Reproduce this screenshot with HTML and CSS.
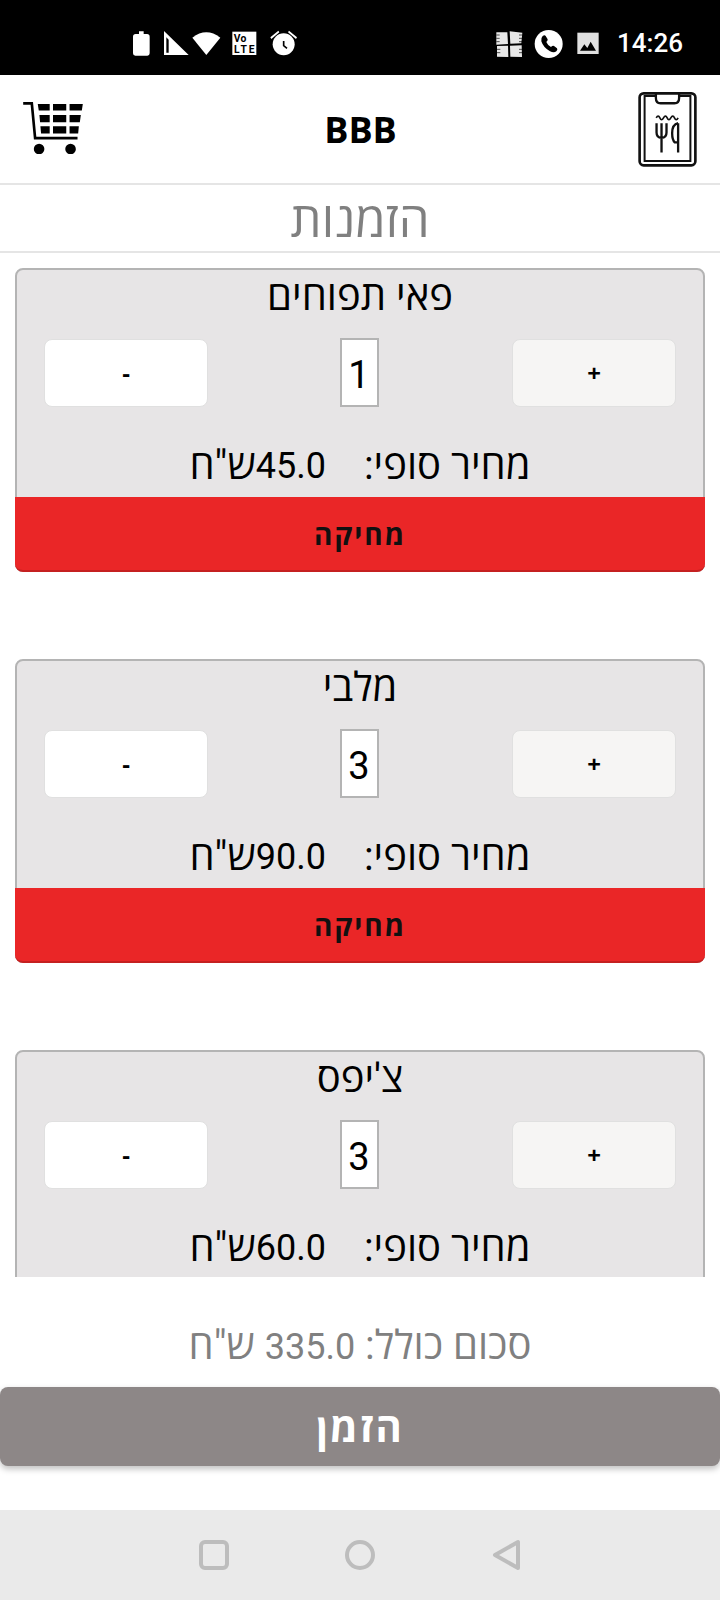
FILE: index.html
```html
<!DOCTYPE html>
<html lang="he">
<head>
<meta charset="utf-8">
<title>הזמנות</title>
<link rel="stylesheet" href="styles.css">
</head>
<body>
<div class="app">
  <div class="status">
    <svg class="status-left" width="164" height="28" viewBox="400 90 492 84" fill="#fff">
      <path d="M408 102h10v-8h14v8h10q8 0 8 8v50q0 7-7 7h-36q-7 0-7-7v-50q0-8 8-8z"/>
      <path d="M493 93l74 72h-74zM500 112v46h7v-39z" fill-rule="evenodd"/>
      <path d="M578 113q42-32 84 0l-42 52z"/>
      <path d="M698 95h72v70h-72z"/>
      <text x="702" y="125" font-family="Roboto" font-weight="700" font-size="31" fill="#000" textLength="38">Vo</text>
      <text x="703" y="158" font-family="Roboto" font-weight="700" font-size="31" fill="#000" textLength="62">LTE</text>
      <circle cx="852" cy="133" r="33"/>
      <path d="M812 112l24-20 3 5-24 20zM892 112l-24-20-3 5 24 20z"/>
      <path d="M852 123v14l10 8" fill="none" stroke="#000" stroke-width="5"/>
    </svg>
    <svg class="status-right" width="103" height="28" viewBox="415 90 307 84" fill="#fff">
      <path d="M415 97l33 0 2 35-35 2zM455 94l38 4-3 32-33 1zM417 138l33-1 1 34-34-1zM456 137l35-1 1 35-35-1z" fill="#e8e8e8"/>
      <path d="M415 105h10M415 115h10M415 125h10M483 105h10M483 115h10M483 125h10M417 148h10M417 158h10M483 148h10M483 158h10" stroke="#000" stroke-width="2"/>
      <circle cx="572" cy="132" r="42"/>
      <path d="M554 108q6-4 9 0l6 10q1 4-4 8 4 10 14 15 5-5 9-3l9 7q3 4-2 9-7 6-19 0-20-11-26-30-2-10 4-16z" fill="#000"/>
      <path d="M658 98h64v64h-64z" fill="#e0e0e0"/>
      <path d="M666 152l13-19 9 11 10-19 16 27z" fill="#000"/>
    </svg>
    <span class="clock">14:26</span>
  </div>

  <header class="topbar">
    <svg class="cart" width="60" height="53" viewBox="68 300 180 160">
      <path d="M68 307h26l10 105h128" fill="none" stroke="#000" stroke-width="8"/>
      <path d="M112 309h36v20h-33zM158 309h40v20h-40zM208 309h40l-3 20h-37zM117 342h31v22h-29zM158 342h40v22h-40zM208 342h34l-3 22h-31zM120 376h28v22h-26zM158 376h40v22h-40zM208 376h28l-2 22h-26z"/>
      <circle cx="116" cy="445" r="16"/>
      <circle cx="211" cy="445" r="16"/>
    </svg>
    <h1 class="brand">BBB</h1>
    <svg class="menu-icon" width="59" height="75" viewBox="835 272 176 226" fill="none" stroke="#111" stroke-width="8">
      <rect x="839" y="276" width="168" height="217" rx="12"/>
      <path d="M888 284h-34v196h138v-196h-34" stroke-width="6"/>
      <path d="M888 276v14q0 16 14 16h42q14 0 14-16v-14" stroke-width="7"/>
      <path d="M889 350q6-11 11 0t11 0 11 0 11 0 11 0 11 0" stroke-width="5"/>
      <path d="M890 366v28q0 16 15 16t15-16v-28M905 366v88" stroke-width="7"/>
      <path d="M955 366q-18 4-18 30 0 20 8 28h10M955 366v88" stroke-width="7"/>
    </svg>
  </header>

  <div class="page-title" dir="rtl">הזמנות</div>

  <main class="list">
    <section class="item" dir="rtl">
      <div class="item-name">פאי תפוחים</div>
      <div class="stepper" dir="ltr">
        <button class="step step-minus">-</button>
        <div class="qty">1</div>
        <button class="step step-plus">+</button>
      </div>
      <div class="price"><span class="price-label">מחיר סופי:</span><span class="num">45.0</span><span>ש"ח</span></div>
      <button class="delete">מחיקה</button>
    </section>
    <section class="item" dir="rtl">
      <div class="item-name">מלבי</div>
      <div class="stepper" dir="ltr">
        <button class="step step-minus">-</button>
        <div class="qty">3</div>
        <button class="step step-plus">+</button>
      </div>
      <div class="price"><span class="price-label">מחיר סופי:</span><span class="num">90.0</span><span>ש"ח</span></div>
      <button class="delete">מחיקה</button>
    </section>
    <section class="item" dir="rtl">
      <div class="item-name">צ'יפס</div>
      <div class="stepper" dir="ltr">
        <button class="step step-minus">-</button>
        <div class="qty">3</div>
        <button class="step step-plus">+</button>
      </div>
      <div class="price"><span class="price-label">מחיר סופי:</span><span class="num">60.0</span><span>ש"ח</span></div>
    </section>
  </main>

  <footer class="summary">
    <div class="total" dir="rtl">סכום כולל: <span class="num">335.0</span> ש"ח</div>
    <button class="order" dir="rtl">הזמן</button>
  </footer>

  <nav class="navbar">
    <svg width="30" height="30" viewBox="0 0 30 30" fill="none" stroke="#bdbdbd" stroke-width="4"><rect x="2" y="2" width="26" height="26" rx="4"/></svg>
    <svg width="30" height="30" viewBox="0 0 30 30" fill="none" stroke="#bdbdbd" stroke-width="4"><circle cx="15" cy="15" r="13"/></svg>
    <svg width="30" height="32" viewBox="0 0 30 32" fill="none" stroke="#bdbdbd" stroke-width="4" stroke-linejoin="round"><path d="M27 3v26L4 16z"/></svg>
  </nav>
</div>
</body>
</html>
```

FILE: styles.css
```css
* {
  box-sizing: border-box;
}

html,
body {
  margin: 0;
  padding: 0;
  background: #fff;
}

body {
  font-family: Roboto, "Open Sans", "Noto Sans", "Liberation Sans", sans-serif;
  color: #000;
}

.app {
  width: 720px;
  height: 1600px;
  display: flex;
  flex-direction: column;
  overflow: hidden;
}

.status {
  flex: none;
  height: 75px;
  background: #000;
  color: #fff;
  display: flex;
  align-items: center;
  padding: 12px 37px 0 133px;
}

.status-left {
  margin-right: auto;
}

.status-right {
  margin-right: 18px;
}

.clock {
  font-size: 26px;
  font-weight: 500;
  margin-top: -2px;
}

.topbar {
  flex: none;
  height: 110px;
  padding: 0 23px;
  border-bottom: 2px solid #e5e5e5;
  display: flex;
  align-items: center;
  justify-content: space-between;
}

.cart {
  margin-top: -4px;
}

.brand {
  margin: 2px 0 0;
  font-family: "Open Sans", sans-serif;
  font-size: 36px;
  font-weight: 700;
  line-height: 1;
}

.page-title {
  flex: none;
  height: 68px;
  border-bottom: 2px solid #e5e5e5;
  color: #808080;
  font-size: 49px;
  line-height: 72px;
  text-align: center;
}

.list {
  flex: 1;
  min-height: 0;
  overflow: hidden;
  padding: 15px 15px 0;
}

.item {
  height: 304px;
  margin-bottom: 87px;
  background: #e7e5e6;
  border: 2px solid #b4b4b4;
  border-radius: 8px;
  text-align: center;
}

.item-name {
  height: 50px;
  font-size: 40px;
  line-height: 54px;
}

.stepper {
  height: 69px;
  margin-top: 18px;
  padding: 0 27px;
  display: flex;
  align-items: center;
  justify-content: space-between;
}

.step {
  width: 164px;
  height: 68px;
  border: 1px solid #e0e0e0;
  border-radius: 8px;
  font-family: "Open Sans", sans-serif;
  font-size: 24px;
  font-weight: 700;
  color: #000;
}

.step-minus {
  background: #fff;
}

.step-plus {
  background: #f6f5f4;
}

.qty {
  width: 39px;
  height: 69px;
  margin-left: -2px;
  background: #fff;
  border: 2px solid #b4b4b4;
  font-size: 38px;
  line-height: 70px;
}

.price {
  height: 90px;
  padding-top: 32px;
  display: flex;
  justify-content: center;
  font-size: 40px;
  line-height: 54px;
}

.price-label {
  margin-left: 38px;
}

.num {
  font-size: 36px;
}

.delete {
  display: block;
  width: calc(100% + 4px);
  height: 75px;
  margin: 0 -2px;
  background: #ea2627;
  border: 0;
  border-bottom: 2px solid #c52020;
  border-radius: 0 0 8px 8px;
  font-family: "Open Sans", sans-serif;
  font-size: 28px;
  font-weight: 700;
  letter-spacing: 2px;
  color: #111;
}

.summary {
  flex: none;
  height: 233px;
  padding-top: 42px;
  text-align: center;
}

.total {
  height: 54px;
  margin-bottom: 14px;
  color: #808080;
  font-size: 40px;
  line-height: 54px;
}

.order {
  display: block;
  width: 100%;
  height: 79px;
  background: #8d8787;
  border: 0;
  border-radius: 8px;
  box-shadow: 0 3px 6px rgba(0, 0, 0, 0.25);
  font-family: "Open Sans", sans-serif;
  font-size: 40px;
  font-weight: 700;
  letter-spacing: 2px;
  color: #fff;
}

.navbar {
  flex: none;
  height: 90px;
  background: #eaeaea;
  display: grid;
  grid-template-columns: 30px 30px 30px;
  justify-content: center;
  align-items: center;
  column-gap: 116px;
}
```
